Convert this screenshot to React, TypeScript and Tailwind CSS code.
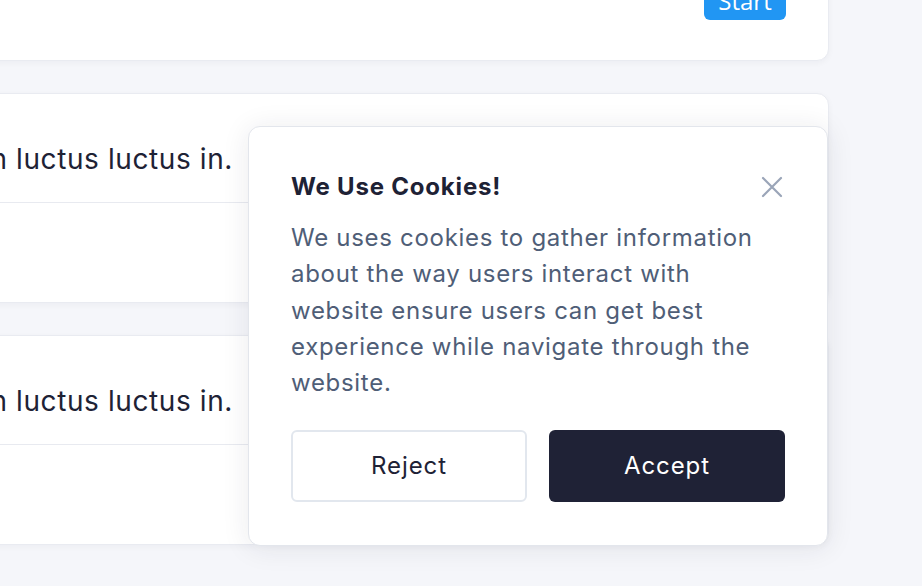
import React from "react";

function Card({ text }: { text: string }) {
  return (
    <div className="w-[1100px] h-[210px] flex-none flex flex-col bg-white rounded-[12px] border border-[#e9ebf1] shadow-[0_2px_6px_rgba(30,34,53,0.04)]">
      <div className="h-[108px] flex items-start pt-[45px]">
        <div className="w-[503px] flex-none flex justify-end">
          <span className="flex-none whitespace-nowrap text-[28px] leading-[40px] tracking-[0.6px] text-[#1e2235] font-['Inter',sans-serif]">
            {text}
          </span>
        </div>
      </div>
      <div className="h-px bg-[#e8eaf0]" />
      <div className="flex-1 flex justify-end items-start pt-[20px] pr-[42px]">
        <button className="w-[82px] h-[39px] rounded-[6px] bg-[#2196f3] text-white text-[24px] leading-none font-['Open_Sans',sans-serif]">
          Start
        </button>
      </div>
    </div>
  );
}

export default function App() {
  const t = "Lorem ipsum dolor sit amet, consectetur adipiscing elit in luctus luctus in.";
  return (
    <div className="relative w-[922px] h-[586px] overflow-hidden bg-[#f5f6fa] font-['Inter',sans-serif]">
      <div className="flex flex-col gap-[32px] ml-[-271px] mt-[-149px]">
        <Card text={t} />
        <Card text={t} />
        <Card text={t} />
      </div>

      <div className="absolute right-[94px] bottom-[40px] w-[580px] h-[420px] bg-white rounded-[12px] border border-[#e3e6ec] shadow-[0_2px_28px_rgba(30,34,53,0.09)] px-[42px] pt-[42px] pb-[43px] flex flex-col">
        <div className="flex items-center justify-between h-[36px]">
          <h2 className="text-[24px] leading-[36px] font-bold text-[#1e2235] tracking-[0.8px]">We Use Cookies!</h2>
          <button className="w-[24px] h-[24px] flex items-center justify-center mr-[1px]" aria-label="Close">
            <svg width="22" height="22" viewBox="0 0 22 22" fill="none" stroke="#9aa5b8" strokeWidth="2.2" strokeLinecap="round">
              <path d="M2 2L20 20M20 2L2 20" />
            </svg>
          </button>
        </div>
        <p className="mt-[15px] text-[24px] leading-[36.3px] tracking-[0.7px] text-[#4f5e77]">
          We uses cookies to gather information about the way users interact with website ensure users can get best experience while navigate through the website.
        </p>
        <div className="mt-auto grid grid-cols-2 gap-[22px]">
          <button className="h-[72px] rounded-[6px] border-2 border-[#e2e7ee] bg-white text-[24px] font-normal tracking-[0.9px] text-[#1e2235]">
            Reject
          </button>
          <button className="h-[72px] rounded-[6px] bg-[#1f2236] text-[24px] font-normal tracking-[0.9px] text-white">
            Accept
          </button>
        </div>
      </div>
    </div>
  );
}
